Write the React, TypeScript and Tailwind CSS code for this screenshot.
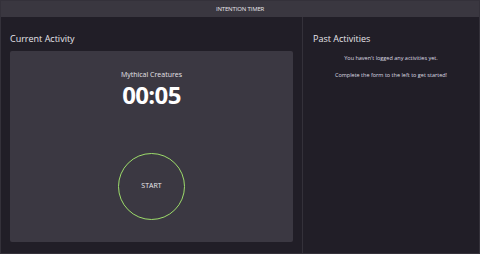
import React from "react";

export default function App() {
  return (
    <div
      className="flex h-[254px] w-[480px] flex-col overflow-hidden border border-[#34313a] bg-[#211e27] text-white"
      style={{ fontFamily: "'Open Sans', 'Liberation Sans', sans-serif" }}
    >
      {/* Title bar */}
      <div className="flex h-[16px] shrink-0 items-center justify-center bg-[#3a3740] text-[6px] tracking-tight text-[#e8e6ec]">
        INTENTION TIMER
      </div>

      <div className="flex flex-1">
        {/* Current activity */}
        <section className="flex w-[302px] flex-col border-r border-[#34313a] px-[9px] pb-[11px] pt-[15px]">
          <h2 className="text-[9px] leading-[14px] text-[#e6e4ea]">Current Activity</h2>
          <div className="mt-[5px] flex flex-1 flex-col items-center rounded-[2px] bg-[#3b3842] pt-[19px]">
            <p className="text-[7px] leading-[10px] text-[#e4e2e8]">Mythical Creatures</p>
            <p className="mt-[3px] text-[24px] font-bold leading-[24px] tracking-tight">00:05</p>
            <button className="mt-[46px] flex h-[67px] w-[67px] items-center justify-center rounded-full border-[1.5px] border-[#9ddc6b] text-[7px] text-[#ecebef]">
              START
            </button>
          </div>
        </section>

        {/* Past activities */}
        <section className="flex flex-1 flex-col px-[10px] pt-[15px]">
          <h2 className="text-[9px] leading-[14px] text-[#e6e4ea]">Past Activities</h2>
          <p className="mt-[7px] text-center text-[5.5px] leading-[10px] text-[#dddbe2]">
            You haven't logged any activities yet.
          </p>
          <p className="mt-[7px] text-center text-[5.5px] leading-[10px] text-[#dddbe2]">
            Complete the form to the left to get started!
          </p>
        </section>
      </div>
    </div>
  );
}
